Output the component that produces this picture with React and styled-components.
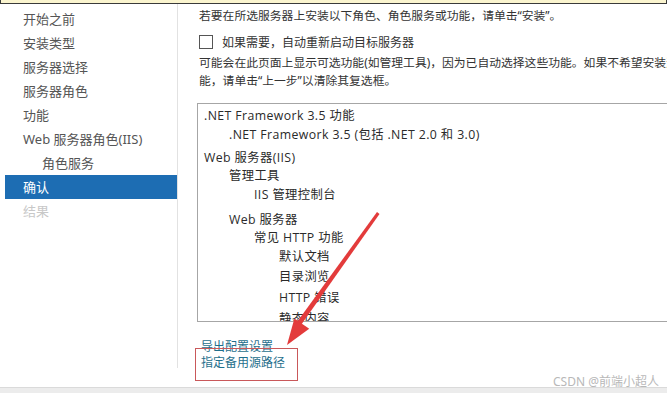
import React from 'react';
import styled, {createGlobalStyle} from 'styled-components';

const GlobalStyle = createGlobalStyle`
  html, body { margin: 0; padding: 0; background: #fff; }
  body { font-family: "Noto Sans", "Noto Sans CJK SC", sans-serif; color: #2f2f2f; }
`;

const steps = [
  {label: '开始之前'},
  {label: '安装类型'},
  {label: '服务器选择'},
  {label: '服务器角色'},
  {label: '功能'},
  {label: 'Web 服务器角色(IIS)'},
  {label: '角色服务', sub: true},
  {label: '确认', active: true},
  {label: '结果', disabled: true},
];

const items = [
  {text: '.NET Framework 3.5 功能', level: 0},
  {text: '.NET Framework 3.5 (包括 .NET 2.0 和 3.0)', level: 1},
  {text: 'Web 服务器(IIS)', level: 0, gap: 4.5},
  {text: '管理工具', level: 1},
  {text: 'IIS 管理控制台', level: 2},
  {text: 'Web 服务器', level: 1, gap: 6.5},
  {text: '常见 HTTP 功能', level: 2},
  {text: '默认文档', level: 3},
  {text: '目录浏览', level: 3, tall: true},
  {text: 'HTTP 错误', level: 3, tall: true},
  {text: '静态内容', level: 3, tall: true},
];

const App = () => {
  return (
    <Page>
      <GlobalStyle />
      <Banner />
      <Body>
        <Sidebar>
          {steps.map((s) => (
            <Step key={s.label} $sub={s.sub} $active={s.active} $disabled={s.disabled}>
              {s.label}
            </Step>
          ))}
        </Sidebar>
        <Main>
          <Intro>若要在所选服务器上安装以下角色、角色服务或功能，请单击“安装”。</Intro>
          <CheckRow>
            <CheckBox />
            <span>如果需要，自动重新启动目标服务器</span>
          </CheckRow>
          <Para>
            可能会在此页面上显示可选功能(如管理工具)，因为已自动选择这些功能。如果不希望安装这些可选功
            <br />
            能，请单击“上一步”以清除其复选框。
          </Para>
          <ListBox>
            {items.map((it) => (
              <Item key={it.text} $level={it.level} $gap={it.gap} $tall={it.tall}>
                {it.text}
              </Item>
            ))}
          </ListBox>
          <Links>
            <Link>导出配置设置</Link>
            <Link>指定备用源路径</Link>
          </Links>
        </Main>
      </Body>
      <Footer />
      <Highlight />
      <Arrow viewBox="0 0 667 393" width="667" height="393">
        <polygon points="377,212 379.5,214 301,325 297,322" fill="#e33b3b" />
        <polygon points="287,345 294.4,318.5 309.2,328.7" fill="#e33b3b" />
      </Arrow>
      <Watermark>CSDN @前端小超人</Watermark>
    </Page>
  );
};

const Page = styled.div`
  position: relative;
  width: 667px;
  height: 393px;
  overflow: hidden;
  display: flex;
  flex-direction: column;
`;

const Banner = styled.div`
  height: 3px;
  background: #fbf5cf;
  border: 1px solid #3a3a3a;
  border-top: none;
`;

const Body = styled.div`
  flex: 1;
  display: flex;
  min-height: 0;
`;

const Sidebar = styled.div`
  width: 172px;
  flex-shrink: 0;
  margin-bottom: 19px;
  padding: 3px 0 0 5px;
  border-right: 1px solid #e2e2e2;
  display: flex;
  flex-direction: column;
`;

const Step = styled.div`
  height: 24px;
  line-height: 24px;
  font-size: 13px;
  padding-left: ${(p) => (p.$sub ? '37px' : '18px')};
  color: ${(p) => (p.$active ? '#fff' : p.$disabled ? '#c8c8c8' : '#555')};
  background: ${(p) => (p.$active ? '#1d6db3' : 'transparent')};
  white-space: nowrap;
`;

const Main = styled.div`
  flex: 1;
  padding-left: 21px;
  font-size: 11.8px;
  color: #333;
  min-width: 0;
`;

const Intro = styled.div`
  margin-top: 2px;
  line-height: 18px;
  white-space: nowrap;
`;

const CheckRow = styled.div`
  margin-top: 9px;
  height: 18px;
  display: flex;
  align-items: center;
  gap: 9px;
  font-size: 12px;
  white-space: nowrap;
`;

const CheckBox = styled.span`
  width: 12px;
  height: 12px;
  border: 1px solid #555;
  background: #fff;
`;

const Para = styled.div`
  margin-top: 2px;
  line-height: 18px;
  white-space: nowrap;
`;

const ListBox = styled.div`
  margin-top: 14px;
  margin-left: -2px;
  width: 600px;
  height: 219px;
  box-sizing: border-box;
  border: 1px solid #a6a6a6;
  padding-top: 3px;
  overflow: hidden;
`;

const Item = styled.div`
  height: ${(p) => (p.$tall ? '21px' : '18.5px')};
  line-height: ${(p) => (p.$tall ? '21px' : '18.5px')};
  margin-top: ${(p) => p.$gap || 0}px;
  padding-left: ${(p) => 6 + p.$level * 25}px;
  font-family: "Open Sans", "Noto Sans CJK SC", sans-serif;
  font-size: 12.3px;
  letter-spacing: 0.4px;
  color: #2a2a2a;
  white-space: nowrap;
`;

const Links = styled.div`
  margin-top: 17px;
  display: flex;
  flex-direction: column;
`;

const Link = styled.a`
  height: 16px;
  line-height: 16px;
  font-size: 12px;
  color: #1f6f8c;
  white-space: nowrap;
  margin-left: 2px;
`;

const Footer = styled.div`
  height: 5px;
  background: #ececec;
  border-top: 1px solid #dadada;
`;

const Highlight = styled.div`
  position: absolute;
  left: 195px;
  top: 348px;
  width: 101px;
  height: 31px;
  border: 1px solid #c9585a;
`;

const Arrow = styled.svg`
  position: absolute;
  left: 0;
  top: 0;
  pointer-events: none;
`;

const Watermark = styled.div`
  position: absolute;
  right: 8px;
  top: 372px;
  font-size: 12px;
  color: #b8b8b8;
  white-space: nowrap;
`;

export default App;
